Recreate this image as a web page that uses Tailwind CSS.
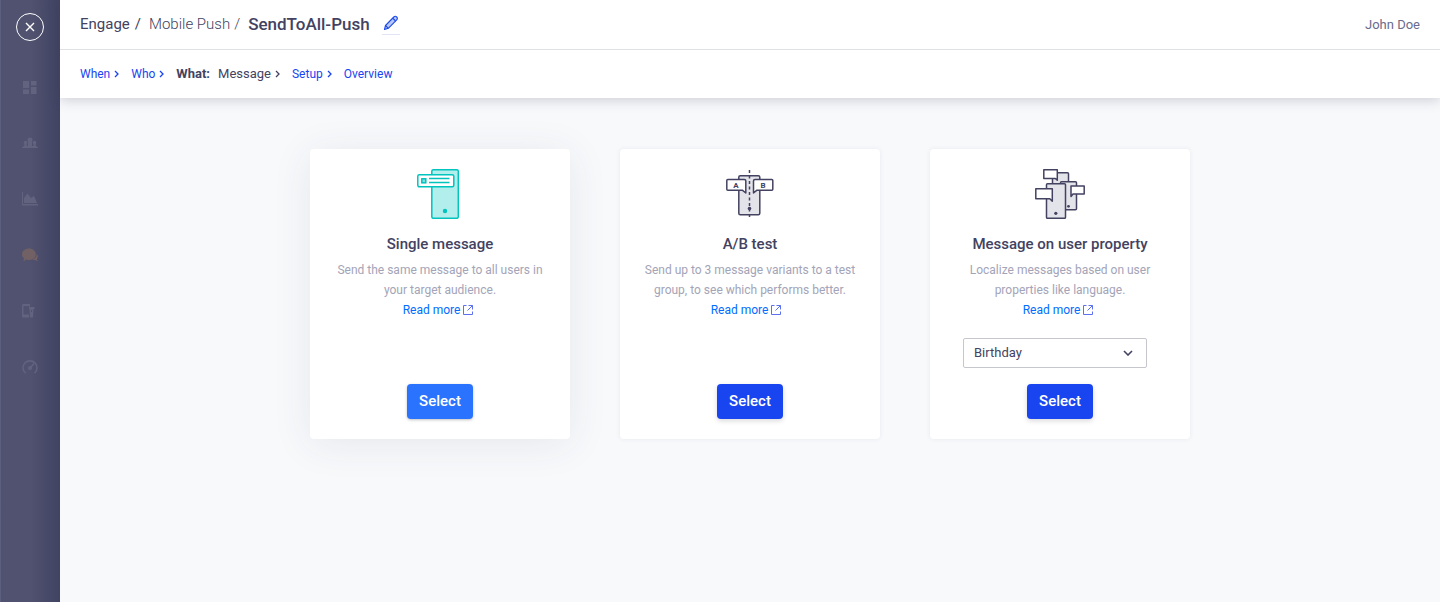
<!DOCTYPE html>
<html lang="en">
<head>
  <meta charset="UTF-8">
  <title>SendToAll-Push - Mobile Push</title>
  <meta name="viewport" content="width=device-width, initial-scale=1.0">
  <script src="https://cdn.jsdelivr.net/npm/@tailwindcss/browser@4"></script>
</head>
<body class="flex min-h-screen bg-[#f8f9fb] font-['Roboto',sans-serif] text-[#434261]">

  <!-- Sidebar -->
  <aside class="w-[60px] shrink-0 bg-linear-to-r from-[#50526f] from-50% to-[#414363] text-[#61637f] shadow-[inset_1px_0_0_#5d5f80]">
    <nav class="flex flex-col items-center">
      <button type="button" aria-label="Close" class="mt-[13px] mb-[38px] flex size-7 items-center justify-center rounded-full border border-white text-white">
        <svg class="size-2.5" viewBox="0 0 10 10" fill="none" stroke="currentColor" stroke-width="1.400"><path d="M1 1l8 8M9 1L1 9"/></svg>
      </button>
      <div class="flex flex-col gap-10">
        <a href="#" aria-label="Dashboard"><svg class="size-4" viewBox="0 0 16 16" fill="currentColor"><path d="M1 2h6v7H1zM1 10.500h6V15H1zM9 2h5.500v4.500H9zM9 8h5.500v7H9z"/></svg></a>
        <a href="#" aria-label="Users"><svg class="size-4" viewBox="0 0 16 16" fill="currentColor"><circle cx="8" cy="5" r="2.500"/><path d="M6 6h4v5.500H6z"/><circle cx="3.500" cy="7.500" r="1.800"/><circle cx="12.500" cy="7.500" r="1.800"/><path d="M2.300 8h2.500v3.500H2.300zM11.300 8h2.500v3.500h-2.500zM0 12.500l2-1.500h12l2 1.500v.5H0z"/></svg></a>
        <a href="#" aria-label="Analytics"><svg class="size-4" viewBox="0 0 16 16" fill="currentColor"><path d="M0 1h1v12h15v1.500H0zM2 12V7l3.500-4.500L9 7l3-2 3 7z"/></svg></a>
        <a href="#" aria-label="Engage" class="text-[#716064]"><svg class="size-4" viewBox="0 0 16 16" fill="currentColor"><path d="M7 1.500c4 0 6.800 2.500 6.800 5.700S11 13 7 13c-1.200 0-2.200-.2-3-.6C3.300 13.400 2 14 1 14c.8-.7 1-1.600.9-2.500C.7 10.400 0 9 0 7.300 0 4 3 1.500 7 1.500z"/><path d="M14.700 6.500c1.300 1.500 1.700 4 .2 5.500 0 .8.300 1.400.8 1.900-1 0-1.900-.4-2.500-1-1 .3-2.200.2-3-.2 2.700-.9 4.700-3 4.500-6.200z"/></svg></a>
        <a href="#" aria-label="Devices"><svg class="size-4" viewBox="0 0 16 16" fill="currentColor"><path d="M1.500 1h6.500v2.500H7V3H1.500v8.500H7V14.500H1.500C.6 14.500 0 14 0 13V2.500C0 1.500.6 1 1.500 1z"/><path fill-rule="evenodd" d="M7 4h5.500v2H11.500l-.5 8.500H8L7.500 6H7zM9 7v2h1V7z"/></svg></a>
        <a href="#" aria-label="Performance"><svg class="size-4" viewBox="0 0 16 16" fill="none" stroke="currentColor" stroke-width="1.600"><path d="M3.500 14.200A7 7 0 1 1 12.500 14.200"/><circle cx="8" cy="9" r="1.300" fill="currentColor"/><path d="M8 9l4-4.500"/></svg></a>
      </div>
    </nav>
  </aside>

  <div class="flex min-w-0 grow flex-col">
    <!-- Page header -->
    <header class="bg-white shadow-[0_2px_12px_rgba(50,50,80,0.22)]">
      <div class="flex h-[50px] items-center justify-between border-b border-[#e0e1e5] px-5">
        <div class="flex items-center">
          <a href="#" class="text-[15px]">Engage</a>
          <span class="ml-[5px] text-[15px]">/</span>
          <a href="#" class="ml-2 text-[15px] font-light">Mobile Push</a>
          <span class="ml-1 text-[15px] font-light">/</span>
          <h1 class="ml-2 text-[17px] font-medium">SendToAll-Push</h1>
          <button type="button" aria-label="Edit name" class="ml-3 flex h-5 w-[18px] items-start justify-center border-b border-[#e2e3f5] text-[#1d4ae8]">
            <svg class="size-4" viewBox="0 0 16 16" fill="none" stroke="currentColor" stroke-width="1.100" stroke-linejoin="round"><path fill="#b9c8fa" d="M1.500 14.500l1-4L10.800 2c1-1 2.200-.7 2.900 0s1 1.900 0 2.900L5.300 13.300z"/><path d="M9.700 3.100l2.900 2.900M2.500 10.500l2.800 2.800"/></svg>
          </button>
        </div>
        <span class="text-[13px] text-[#6a6b8c]">John Doe</span>
      </div>
      <nav class="flex h-12 items-center px-5 text-[12px] text-[#1845f0]">
        <a href="#">When</a>
        <svg class="mr-3 ml-1 h-2 w-[5px]" viewBox="0 0 5 8" fill="none" stroke="currentColor" stroke-width="1.300"><path d="M1 1l3 3-3 3"/></svg>
        <a href="#">Who</a>
        <svg class="mr-3 ml-1 h-2 w-[5px]" viewBox="0 0 5 8" fill="none" stroke="currentColor" stroke-width="1.300"><path d="M1 1l3 3-3 3"/></svg>
        <span class="text-[13px] font-bold text-[#434261]">What:</span>
        <span class="ml-2 text-[13px] text-[#434261]">Message</span>
        <svg class="mr-3 ml-1 h-2 w-[5px] text-[#434261]" viewBox="0 0 5 8" fill="none" stroke="currentColor" stroke-width="1.300"><path d="M1 1l3 3-3 3"/></svg>
        <a href="#">Setup</a>
        <svg class="mr-3 ml-1 h-2 w-[5px]" viewBox="0 0 5 8" fill="none" stroke="currentColor" stroke-width="1.300"><path d="M1 1l3 3-3 3"/></svg>
        <a href="#">Overview</a>
      </nav>
    </header>

    <!-- Message type cards -->
    <main class="flex justify-center gap-[50px] pt-[51px]">
      <section class="flex min-h-[290px] w-[260px] flex-col items-center rounded bg-white py-5 shadow-[0_5px_40px_rgba(50,50,90,0.09)]">
        <svg class="size-[50px]" viewBox="0 0 50 50" fill="none" stroke="#00c4bd" stroke-width="1.500">
          <rect x="16.800" y="0.800" width="26.500" height="48.500" rx="1.500" fill="#b2eeec"/>
          <rect x="2.800" y="5.800" width="36" height="12" rx="1.500" fill="#fff"/>
          <rect x="6.800" y="9.800" width="4" height="4" fill="#7fe1de"/>
          <path d="M14 9.500h20.500M14 13.500h20.500"/>
          <circle cx="30" cy="42" r="2.200" fill="#00c4bd" stroke="none"/>
        </svg>
        <h2 class="mt-[15px] text-[15px] leading-5 font-medium">Single message</h2>
        <p class="mt-1.5 px-5 text-center text-[12px] leading-5 text-[#a3a4b7]">Send the same message to all users in<br>your target audience.</p>
        <a href="#" class="mr-1 flex items-center gap-[3px] text-[12px] leading-5 text-[#006dff]">Read more
          <svg class="size-2.5" viewBox="0 0 10 10" fill="none" stroke="#5d70ee"><path d="M3.500.5h-3v9h9v-3M5.500.5h4v4M9.500.5l-5 5"/></svg>
        </a>
        <button type="button" class="mt-auto h-[35px] w-[66px] rounded bg-[#2a73ff] text-[15px] font-medium text-white shadow-[0_1px_3px_rgba(0,0,0,0.25)]">Select</button>
      </section>

      <section class="flex min-h-[290px] w-[260px] flex-col items-center rounded bg-white py-5 shadow-[0_0_5px_rgba(50,50,90,0.08)]">
        <svg class="size-[50px]" viewBox="0 0 50 50" fill="none" stroke="#434261" stroke-width="1.500">
          <rect x="13.800" y="6.800" width="21" height="39" rx="1.500" fill="#e3e3ea"/>
          <path d="M24.500 1v49" stroke-dasharray="3 2.500"/>
          <path fill="#fff" stroke-linejoin="round" d="M2.800 10.500h16.500q1.500 0 1.500 1.500v12l-3.500-2.800H2.800q-1 0-1-1v-8.700q0-1 1-1zM46.800 10.500H30q-1.500 0-1.500 1.500v12l3.500-2.800h14.800q1 0 1-1v-8.700q0-1-1-1z"/>
          <circle cx="24.500" cy="39.500" r="1.800" fill="#434261" stroke="none"/>
          <g class="text-[8px] font-bold" fill="#434261" stroke="none" text-anchor="middle"><text x="11" y="19">A</text><text x="38" y="19">B</text></g>
        </svg>
        <h2 class="mt-[15px] text-[15px] leading-5 font-medium">A/B test</h2>
        <p class="mt-1.5 px-5 text-center text-[12px] leading-5 text-[#a3a4b7]">Send up to 3 message variants to a test<br>group, to see which performs better.</p>
        <a href="#" class="mr-2 flex items-center gap-[3px] text-[12px] leading-5 text-[#006dff]">Read more
          <svg class="size-2.5" viewBox="0 0 10 10" fill="none" stroke="#5d70ee"><path d="M3.500.5h-3v9h9v-3M5.500.5h4v4M9.500.5l-5 5"/></svg>
        </a>
        <button type="button" class="mt-auto h-[35px] w-[66px] rounded bg-[#1845f0] text-[15px] font-medium text-white shadow-[0_2px_5px_rgba(0,0,0,0.15)]">Select</button>
      </section>

      <section class="flex min-h-[290px] w-[260px] flex-col items-center rounded bg-white py-5 shadow-[0_0_5px_rgba(50,50,90,0.08)]">
        <svg class="size-[50px]" viewBox="0 0 50 50" fill="none" stroke="#434261" stroke-width="1.500" stroke-linejoin="round">
          <rect x="17.500" y="3.800" width="16" height="20" rx="1" fill="#e3e3ea"/>
          <rect x="25.500" y="12.800" width="16" height="28" rx="1" fill="#e3e3ea"/>
          <rect x="11.500" y="14.800" width="19" height="34.500" rx="1" fill="#e3e3ea"/>
          <path fill="#fff" d="M8.800.8h13.500v10.500l-2-1.800H8.800zM.8 19.800h16.500v12.500l-2.500-2.500H.8zM49.200 17H36v10.500l2-2.500h11.200z"/>
          <circle cx="20.800" cy="44.300" r="1.600" fill="#434261" stroke="none"/>
          <circle cx="33.500" cy="37.300" r="1.400" fill="#434261" stroke="none"/>
        </svg>
        <h2 class="mt-[15px] text-[15px] leading-5 font-medium">Message on user property</h2>
        <p class="mt-1.5 px-5 text-center text-[12px] leading-5 text-[#a3a4b7]">Localize messages based on user<br>properties like language.</p>
        <a href="#" class="mr-1 flex items-center gap-[3px] text-[12px] leading-5 text-[#006dff]">Read more
          <svg class="size-2.5" viewBox="0 0 10 10" fill="none" stroke="#5d70ee"><path d="M3.500.5h-3v9h9v-3M5.500.5h4v4M9.500.5l-5 5"/></svg>
        </a>
        <div class="mt-[18px] grid w-full items-center pr-[43px] pl-[33px]">
          <select aria-label="User property" class="col-start-1 row-start-1 h-[30px] w-full appearance-none rounded-xs border border-[#c6c7cc] bg-white px-2.5 text-[13px]">
            <option>Birthday</option>
            <option>Language</option>
            <option>Country</option>
          </select>
          <svg class="pointer-events-none col-start-1 row-start-1 mr-3.5 h-1.5 w-2.5 justify-self-end" viewBox="0 0 10 6" fill="none" stroke="currentColor" stroke-width="1.600"><path d="M1 1l4 4 4-4"/></svg>
        </div>
        <button type="button" class="mt-auto h-[35px] w-[66px] rounded bg-[#1845f0] text-[15px] font-medium text-white shadow-[0_2px_5px_rgba(0,0,0,0.15)]">Select</button>
      </section>
    </main>
  </div>

</body>
</html>
